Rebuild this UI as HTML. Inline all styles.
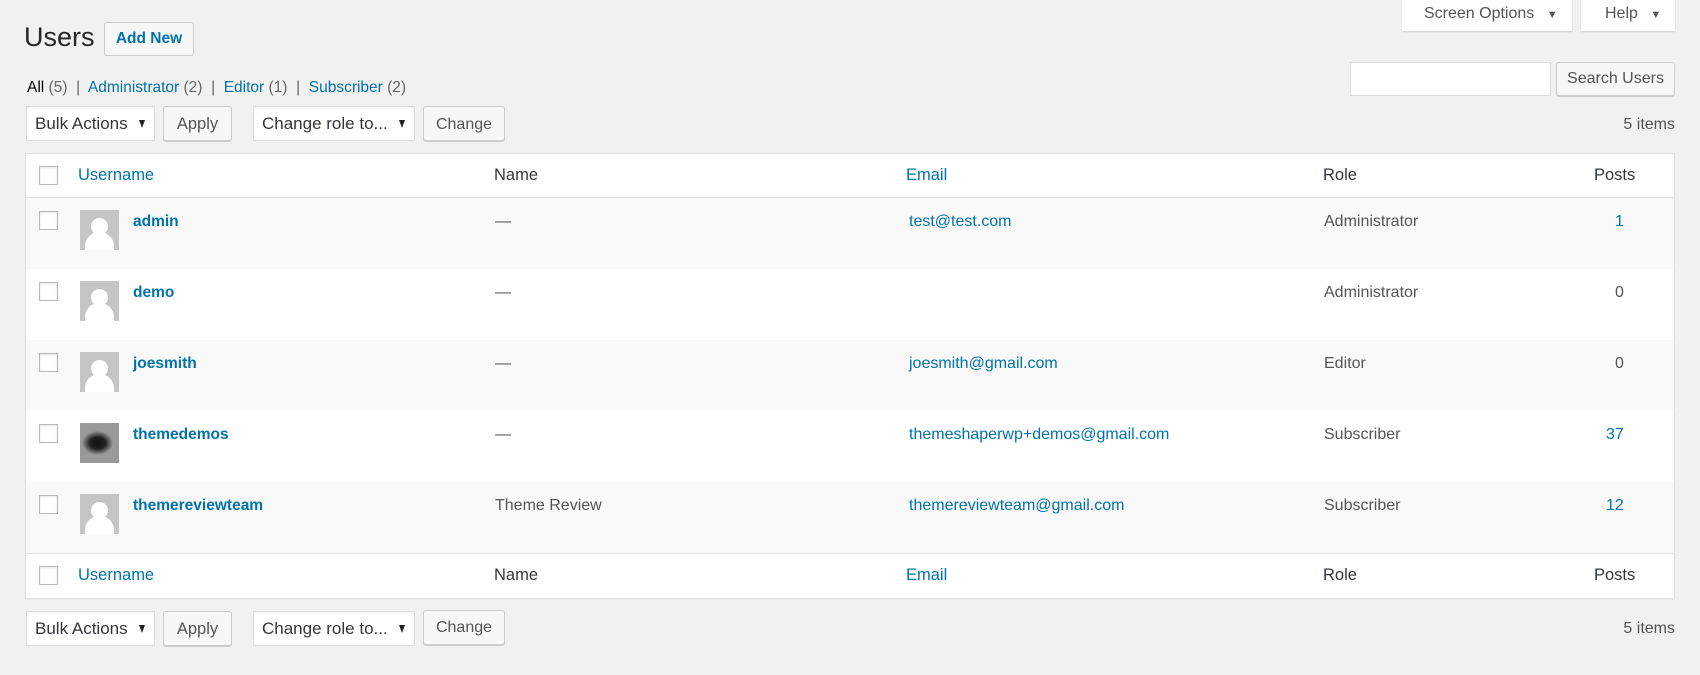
<!DOCTYPE html>
<html><head><meta charset="utf-8"><style>
*{box-sizing:border-box;margin:0;padding:0}
body{width:1700px;height:675px;background:#f1f1f1;font-family:"Liberation Sans",Arial,sans-serif;font-size:16px;color:#555;position:relative;overflow:hidden}
.a{position:absolute;white-space:nowrap}
.link{color:#0073aa}
.btn{position:absolute;background:#f7f7f7;border:1px solid #ccc;border-radius:3px;box-shadow:0 1px 0 #ccc;color:#555;font-size:16px;text-align:center;white-space:nowrap}
.sel{position:absolute;background:#fff;border:1px solid #ddd;box-shadow:inset 0 1px 2px rgba(0,0,0,.07);color:#32373c;font-size:17px;padding-left:8px;white-space:nowrap}
.sel:after{content:"";position:absolute;right:9px;top:13px;border-left:3.5px solid transparent;border-right:3.5px solid transparent;border-top:8px solid #222}
.tbl{position:absolute;left:25px;top:153px;width:1650px;height:446px;background:#fff;border:1px solid #e1e1e1;box-shadow:0 1px 1px rgba(0,0,0,.04)}
.row{position:absolute;left:0;width:1648px;height:71px}
.odd{background:#f9f9f9}
.cb{position:absolute;left:13px;width:19px;height:19px;border:1px solid #b4b9be;background:#fff;box-shadow:inset 0 1px 2px rgba(0,0,0,.1)}
.av{position:absolute;left:54px;top:12px;width:39px;height:40px;background:#c5c5c5;overflow:hidden}
.av:before{content:"";position:absolute;left:11px;top:8px;width:17px;height:17px;border-radius:50%;background:#fff}
.av:after{content:"";position:absolute;left:5px;top:22px;width:29px;height:28px;border-radius:14px 14px 0 0;background:#fff}
.t{position:absolute;top:15px;white-space:nowrap;font-size:16px}
.b{font-weight:bold;font-size:15.5px}
.hd{font-size:16.5px;color:#32373c;top:12px}
</style></head><body>
<div class="a" style="left:24px;top:22px;font-size:27px;color:#23282d">Users</div>
<div class="btn" style="left:104px;top:22px;width:90px;height:34px;line-height:32px;color:#0073aa;font-weight:bold;font-size:15.5px;box-shadow:none">Add New</div>
<div class="a" style="left:27px;top:79px;font-size:15.5px;color:#666"><span style="color:#000">All</span> (5) &nbsp;|&nbsp; <span class="link">Administrator</span> (2) &nbsp;|&nbsp; <span class="link">Editor</span> (1) &nbsp;|&nbsp; <span class="link">Subscriber</span> (2)</div>

<div class="a" style="left:1402px;top:-2px;width:170px;height:33px;background:#fff;box-shadow:0 1px 1px rgba(0,0,0,.15);color:#555;font-size:16px;line-height:31px;padding-left:22px">Screen Options <span style="font-size:11px;margin-left:8px">▼</span></div>
<div class="a" style="left:1581px;top:-2px;width:94px;height:33px;background:#fff;box-shadow:0 1px 1px rgba(0,0,0,.15);color:#555;font-size:16px;line-height:31px;padding-left:24px">Help <span style="font-size:11px;margin-left:8px">▼</span></div>
<div class="a" style="left:1350px;top:62px;width:201px;height:34px;background:#fff;border:1px solid #ddd"></div>
<div class="btn" style="left:1556px;top:62px;width:119px;height:34px;line-height:32px;font-size:16px">Search Users</div>

<div class="sel" style="left:26px;top:106px;width:129px;height:35px;line-height:33px">Bulk Actions</div>
<div class="btn" style="left:163px;top:106px;width:69px;height:35px;line-height:35px;font-size:16.5px">Apply</div>
<div class="sel" style="left:253px;top:106px;width:162px;height:35px;line-height:33px">Change role to...</div>
<div class="btn" style="left:423px;top:106px;width:82px;height:35px;line-height:35px;font-size:16px">Change</div>
<div class="a" style="right:25px;top:116px;font-size:16px;color:#555">5 items</div>

<div class="tbl">
 <div class="row" style="top:0;height:44px;border-bottom:1px solid #e1e1e1">
  <div class="cb" style="top:12px"></div>
  <div class="t hd" style="left:52px;color:#0073aa">Username</div>
  <div class="t hd" style="left:468px">Name</div>
  <div class="t hd" style="left:880px;color:#0073aa">Email</div>
  <div class="t hd" style="left:1297px">Role</div>
  <div class="t hd" style="left:1568px">Posts</div>
 </div>
 <div class="row odd" style="top:44px">
  <div class="cb" style="top:13px"></div><div class="av"></div>
  <div class="t link b" style="left:107px">admin</div>
  <div class="t" style="left:469px">—</div>
  <div class="t link" style="left:883px">test@test.com</div>
  <div class="t" style="left:1298px">Administrator</div>
  <div class="t link" style="left:1589px">1</div>
 </div>
 <div class="row" style="top:115px">
  <div class="cb" style="top:13px"></div><div class="av"></div>
  <div class="t link b" style="left:107px">demo</div>
  <div class="t" style="left:469px">—</div>
  <div class="t" style="left:1298px">Administrator</div>
  <div class="t" style="left:1589px">0</div>
 </div>
 <div class="row odd" style="top:186px">
  <div class="cb" style="top:13px"></div><div class="av"></div>
  <div class="t link b" style="left:107px">joesmith</div>
  <div class="t" style="left:469px">—</div>
  <div class="t link" style="left:883px">joesmith@gmail.com</div>
  <div class="t" style="left:1298px">Editor</div>
  <div class="t" style="left:1589px">0</div>
 </div>
 <div class="row" style="top:257px">
  <div class="cb" style="top:13px"></div>
  <div class="a" style="left:54px;top:12px;width:39px;height:40px;background:radial-gradient(ellipse 40% 30% at 45% 50%,#111 0,#222 50%,#999 100%),#aaa"></div>
  <div class="t link b" style="left:107px">themedemos</div>
  <div class="t" style="left:469px">—</div>
  <div class="t link" style="left:883px">themeshaperwp+demos@gmail.com</div>
  <div class="t" style="left:1298px">Subscriber</div>
  <div class="t link" style="left:1580px">37</div>
 </div>
 <div class="row odd" style="top:328px">
  <div class="cb" style="top:13px"></div><div class="av"></div>
  <div class="t link b" style="left:107px">themereviewteam</div>
  <div class="t" style="left:469px">Theme Review</div>
  <div class="t link" style="left:883px">themereviewteam@gmail.com</div>
  <div class="t" style="left:1298px">Subscriber</div>
  <div class="t link" style="left:1580px">12</div>
 </div>
 <div class="row" style="top:399px;height:45px;border-top:1px solid #e1e1e1">
  <div class="cb" style="top:12px"></div>
  <div class="t hd" style="left:52px;color:#0073aa">Username</div>
  <div class="t hd" style="left:468px">Name</div>
  <div class="t hd" style="left:880px;color:#0073aa">Email</div>
  <div class="t hd" style="left:1297px">Role</div>
  <div class="t hd" style="left:1568px">Posts</div>
 </div>
</div>

<div class="sel" style="left:26px;top:611px;width:129px;height:35px;line-height:33px">Bulk Actions</div>
<div class="btn" style="left:163px;top:611px;width:69px;height:35px;line-height:35px;font-size:16.5px">Apply</div>
<div class="sel" style="left:253px;top:611px;width:162px;height:35px;line-height:33px">Change role to...</div>
<div class="btn" style="left:423px;top:610px;width:82px;height:35px;line-height:33px;font-size:16px">Change</div>
<div class="a" style="right:25px;top:620px;font-size:16px;color:#555">5 items</div>
</body></html>
